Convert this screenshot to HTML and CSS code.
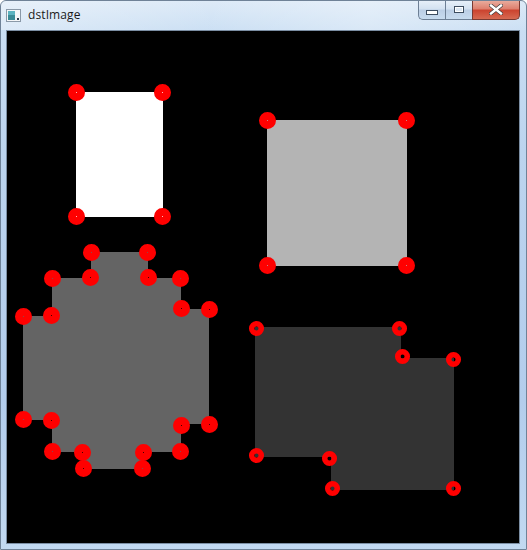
FILE: index.html
```html
<!DOCTYPE html>
<html>
<head>
<meta charset="utf-8">
<link rel="stylesheet" href="styles.css">
</head>
<body>
<div class="window">
  <div class="titlebar">
    <svg class="app-icon" width="15" height="13" viewBox="0 0 15 13">
      <rect x="0.5" y="0.5" width="14" height="12" fill="#f4f6f8" stroke="#8a99a8"/>
      <rect x="2" y="2" width="7" height="9" fill="#3a8a96"/>
      <rect x="2" y="2" width="7" height="4" fill="#5cb3c0"/>
      <rect x="11" y="9" width="2" height="2" fill="#2a3a4a"/>
    </svg>
    <span class="title">dstImage</span>
    <div class="buttons">
      <div class="btn btn-min"><span class="glyph-min"></span></div>
      <div class="btn btn-max"><span class="glyph-max"></span></div>
      <div class="btn btn-close">
        <svg width="14" height="11" viewBox="0 0 14 11">
          <path d="M2 1.5 L12 9.5 M12 1.5 L2 9.5" stroke="#3b3b3b" stroke-width="3.8" stroke-linecap="square"/>
          <path d="M2 1.5 L12 9.5 M12 1.5 L2 9.5" stroke="#ffffff" stroke-width="2.4" stroke-linecap="square"/>
        </svg>
      </div>
    </div>
  </div>
  <div class="client">
    <svg class="canvas" width="512" height="512" viewBox="7 31 512 512">
      <rect x="76" y="92" width="87" height="125" fill="#ffffff"/>
      <rect x="267" y="120" width="140" height="146" fill="#b4b4b4"/>
      <polygon fill="#646464" points="91,252 148,252 148,278 181,278 181,309 209,309 209,424 181,424 181,452 143,452 143,469 84,469 84,452 52,452 52,420 23,420 23,316 52,316 52,278 91,278"/>
      <rect x="255" y="327" width="146" height="130" fill="#333333"/>
      <rect x="331" y="358" width="123" height="132" fill="#333333"/>

      <g fill="none" stroke="#ff0000" stroke-width="8">
        <circle cx="76.5" cy="92.5" r="4.5"/>
        <circle cx="162.5" cy="92.5" r="4.5"/>
        <circle cx="76.5" cy="216.5" r="4.5"/>
        <circle cx="162.5" cy="216.5" r="4.5"/>

        <circle cx="267.5" cy="120.5" r="4.5"/>
        <circle cx="406.5" cy="120.5" r="4.5"/>
        <circle cx="267.5" cy="265.5" r="4.5"/>
        <circle cx="406.5" cy="265.5" r="4.5"/>

        <circle cx="91.5" cy="252.5" r="4.5"/>
        <circle cx="147.5" cy="252.5" r="4.5"/>
        <circle cx="90.5" cy="277.5" r="4.5"/>
        <circle cx="148.5" cy="277.5" r="4.5"/>
        <circle cx="52.5" cy="278.5" r="4.5"/>
        <circle cx="180.5" cy="278.5" r="4.5"/>
        <circle cx="181.5" cy="308.5" r="4.5"/>
        <circle cx="209.5" cy="309.5" r="4.5"/>
        <circle cx="23.5" cy="316.5" r="4.5"/>
        <circle cx="51.5" cy="315.5" r="4.5"/>
        <circle cx="23.5" cy="419.5" r="4.5"/>
        <circle cx="51.5" cy="420.5" r="4.5"/>
        <circle cx="181.5" cy="425.5" r="4.5"/>
        <circle cx="209.5" cy="424.5" r="4.5"/>
        <circle cx="52.5" cy="451.5" r="4.5"/>
        <circle cx="180.5" cy="451.5" r="4.5"/>
        <circle cx="82.5" cy="452.5" r="4.5"/>
        <circle cx="143.5" cy="452.5" r="4.5"/>
        <circle cx="83.5" cy="468.5" r="4.5"/>
        <circle cx="142.5" cy="468.5" r="4.5"/>
      </g>
      <g fill="none" stroke="#ff0000" stroke-width="5.5">
        <circle cx="256.5" cy="328.5" r="4.8"/>
        <circle cx="399.5" cy="328.5" r="4.8"/>
        <circle cx="402.5" cy="356.5" r="4.8"/>
        <circle cx="453.5" cy="359.5" r="4.8"/>
        <circle cx="256.5" cy="455.5" r="4.8"/>
        <circle cx="329.5" cy="458.5" r="4.8"/>
        <circle cx="332.5" cy="488.5" r="4.8"/>
        <circle cx="453.5" cy="488.5" r="4.8"/>
      </g>
    </svg>
  </div>
</div>
</body>
</html>
```

FILE: styles.css
```css
html, body {
  margin: 0;
  padding: 0;
  background: #ffffff;
}

.window {
  width: 527px;
  height: 550px;
  box-sizing: border-box;
  border: 1px solid #6f8297;
  border-radius: 6px 6px 0 0;
  background: linear-gradient(180deg, #dbe9f7 0px, #c9def3 30px, #bcd4ee 150px, #b3cdec 400px, #c2d9f1 550px);
  display: flex;
  flex-direction: column;
  overflow: hidden;
}

.titlebar {
  height: 29px;
  display: flex;
  align-items: flex-start;
  background: linear-gradient(90deg, rgba(255,255,255,0.35) 0%, rgba(255,255,255,0.05) 40%, rgba(255,255,255,0.3) 70%, rgba(255,255,255,0.05) 100%);
}

.app-icon {
  margin: 8px 0 0 5px;
  flex: none;
}

.title {
  font-family: "Open Sans", "DejaVu Sans", sans-serif;
  font-size: 12px;
  color: #1a1a1a;
  margin: 6px 0 0 7px;
  line-height: 16px;
  letter-spacing: 0.1px;
}

.buttons {
  margin-left: auto;
  margin-right: 6px;
  display: flex;
  height: 20px;
  margin-top: -1px;
}

.btn {
  height: 20px;
  box-sizing: border-box;
  border: 1px solid #6d7f95;
  border-top: none;
  display: flex;
  align-items: center;
  justify-content: center;
}

.btn-min {
  width: 27px;
  border-radius: 0 0 0 5px;
  border-right: none;
  background: linear-gradient(180deg, #e9f1fa 0%, #d4e2f1 45%, #bccfe6 55%, #c7dbef 100%);
}

.btn-max {
  width: 27px;
  border-right: none;
  background: linear-gradient(180deg, #e9f1fa 0%, #d4e2f1 45%, #bccfe6 55%, #c7dbef 100%);
}

.btn-close {
  width: 48px;
  border-radius: 0 0 5px 0;
  border-color: #7a3a32;
  background: linear-gradient(180deg, #eab0a2 0%, #de8170 45%, #cc4430 55%, #d66a52 100%);
}

.glyph-min {
  width: 10px;
  height: 3px;
  margin-top: 6px;
  background: #ffffff;
  border: 1px solid #3d4d60;
}

.glyph-max {
  width: 8px;
  height: 5px;
  border: 1px solid #3d4d60;
  box-shadow: 0 0 0 1px #ffffff inset;
  background: #dce8f4;
}

.client {
  margin: 0 0 0 5px;
  width: 512px;
  height: 512px;
  border: 1px solid #7b8ea3;
  background: #000000;
}

.canvas {
  display: block;
}
```
